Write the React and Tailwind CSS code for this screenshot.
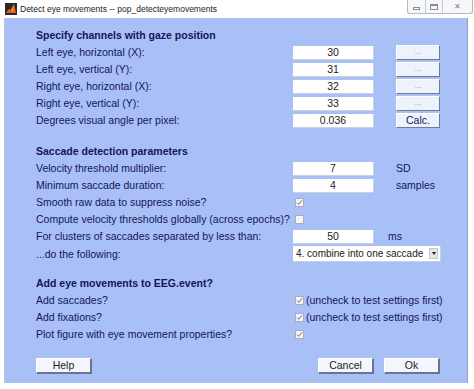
import React from "react";

const navy = "text-[#14145c]";

const Input = ({ value }) => (
  <div className="w-[81px] h-[14px] bg-white border-b border-r border-[#c9d0de] flex items-center justify-center text-[10.5px] leading-none text-[#222]">
    {value}
  </div>
);

const SmallButton = ({ children, dim }) => (
  <div
    className={`w-[44px] h-[15px] bg-[#eef2fd] border-t border-l border-t-white border-l-white border-b border-r border-b-[#6f7b94] border-r-[#6f7b94] flex items-center justify-center leading-none ${
      dim ? "text-[8px] text-[#8890a8] pb-[2px]" : "text-[10.5px] text-[#14145c]"
    }`}
  >
    {children}
  </div>
);

const Checkbox = ({ checked }) => (
  <div className="w-[9px] h-[9px] bg-[#f2f4f8] border border-[#a7adb9] flex items-center justify-center">
    {checked && (
      <svg width="7" height="7" viewBox="0 0 7 7">
        <path d="M1 3.6 L2.7 5.3 L6 1.3" fill="none" stroke="#6a6f7c" strokeWidth="1" />
      </svg>
    )}
  </div>
);

// one line of the dialog: label column, value column, gap, side column
const Row = ({ label, mid, side, h = "h-[17px]" }) => (
  <div className={`flex items-center ${h}`}>
    <div className={`w-[257px] text-[10.5px] leading-none ${navy} whitespace-nowrap`}>{label}</div>
    <div className="w-[81px] flex items-center">{mid}</div>
    <div className="w-[22px]" />
    <div className="flex items-center">{side}</div>
  </div>
);

const Header = ({ children, className = "" }) => (
  <div className={`h-[17px] flex items-center text-[10.5px] font-bold leading-none ${navy} ${className}`}>
    {children}
  </div>
);

const DialogButton = ({ children, className = "" }) => (
  <div
    className={`h-[16px] bg-[#f3f6fe] border-t border-l border-t-white border-l-white border-b-2 border-r-2 border-b-[#6a7590] border-r-[#6a7590] flex items-center justify-center text-[10.5px] leading-none text-[#222] ${className}`}
  >
    {children}
  </div>
);

const TitleIcon = () => (
  <svg width="12" height="12" viewBox="0 0 12 12">
    <rect width="12" height="12" fill="#2a2a2a" />
    <path d="M1 10 L4 6 L6 7 L9 1 L11 10 Z" fill="#e0601a" />
    <path d="M6 7 L9 1 L8 9 Z" fill="#f4a030" />
  </svg>
);

export default function App() {
  return (
    <div className="w-[474px] h-[389px] bg-white relative overflow-hidden font-['Liberation_Sans',Arial,sans-serif]">
      {/* title bar */}
      <div className="h-[18px] flex items-center pl-[5px] gap-[2px]">
        <TitleIcon />
        <span className="text-[8.5px] text-[#222] leading-none ml-[1px]">
          Detect eye movements -- pop_detecteyemovements
        </span>
      </div>
      <div className="absolute top-0 left-[407px] w-[66px] h-[14px] flex border border-t-0 border-[#b5b9c0] rounded-b-[3px] bg-[#f6f7f9]">
        <div className="w-[18px] flex items-center justify-center border-r border-[#c5c9cf]">
          <div className="w-[7px] h-[3px] border border-[#8a8d93] mt-[3px]" />
        </div>
        <div className="w-[17px] flex items-center justify-center border-r border-[#c5c9cf]">
          <div className="w-[8px] h-[6px] border border-[#8a8d93] border-t-2" />
        </div>
        <div className="flex-1 flex items-center justify-center text-[8px] text-[#7d8187] leading-none">
          ✕
        </div>
      </div>

      {/* dialog body */}
      <div className="ml-[4px] w-[464px] h-[365px] bg-[#a8c0f6] border-l border-[#bcc5d6] border-r border-r-[#8ea2cc] pl-[31px] pt-[9px]">
        <Header>Specify channels with gaze position</Header>
        <Row label="Left eye, horizontal (X):" mid={<Input value="30" />} side={<SmallButton dim>...</SmallButton>} />
        <Row label="Left eye, vertical (Y):" mid={<Input value="31" />} side={<SmallButton dim>...</SmallButton>} />
        <Row label="Right eye, horizontal (X):" mid={<Input value="32" />} side={<SmallButton dim>...</SmallButton>} />
        <Row label="Right eye, vertical (Y):" mid={<Input value="33" />} side={<SmallButton dim>...</SmallButton>} />
        <Row label="Degrees visual angle per pixel:" mid={<Input value="0.036" />} side={<SmallButton>Calc.</SmallButton>} />

        <Header className="mt-[14px]">Saccade detection parameters</Header>
        <Row
          label="Velocity threshold multiplier:"
          mid={<Input value="7" />}
          side={<span className={`text-[10.5px] leading-none ${navy}`}>SD</span>}
        />
        <Row
          label="Minimum saccade duration:"
          mid={<Input value="4" />}
          side={<span className={`text-[10.5px] leading-none ${navy}`}>samples</span>}
        />
        <Row label="Smooth raw data to suppress noise?" mid={<div className="pl-[2px]"><Checkbox checked /></div>} />
        <Row
          label="Compute velocity thresholds globally (across epochs)?"
          mid={<div className="pl-[2px]"><Checkbox /></div>}
        />
        <Row
          label="For clusters of saccades separated by less than:"
          mid={<Input value="50" />}
          side={<span className={`text-[10.5px] leading-none ${navy} -ml-[8px]`}>ms</span>}
        />
        <div className="flex items-center h-[18px]">
          <div className={`w-[257px] text-[10.5px] leading-none ${navy}`}>...do the following:</div>
          <div className="w-[148px] h-[16px] bg-white border-b border-r border-[#c9d0de] flex items-center pl-[3px] pr-[2px]">
            <span className="flex-1 text-[10px] leading-none text-[#222] whitespace-nowrap">
              4. combine into one saccade
            </span>
            <div className="w-[9px] h-[11px] bg-[#e3e6ec] border border-[#c5c9d2] flex items-center justify-center">
              <div className="w-0 h-0 border-l-[2.5px] border-r-[2.5px] border-t-[3px] border-l-transparent border-r-transparent border-t-[#222]" />
            </div>
          </div>
        </div>

        <Header className="mt-[12px]">Add eye movements to EEG.event?</Header>
        {["Add saccades?", "Add fixations?"].map((l) => (
          <div key={l} className="flex items-center h-[17px]">
            <div className={`w-[257px] text-[10.5px] leading-none ${navy}`}>{l}</div>
            <div className="pl-[2px] flex items-center gap-[2px]">
              <Checkbox checked />
              <span className={`text-[10.5px] leading-none ${navy} whitespace-nowrap`}>
                (uncheck to test settings first)
              </span>
            </div>
          </div>
        ))}
        <Row label="Plot figure with eye movement properties?" mid={<div className="pl-[2px]"><Checkbox checked /></div>} />

        <div className="flex items-center mt-[15px]">
          <DialogButton className="w-[56px]">Help</DialogButton>
          <div className="w-[226px]" />
          <DialogButton className="w-[56px]">Cancel</DialogButton>
          <div className="w-[10px]" />
          <DialogButton className="w-[56px]">Ok</DialogButton>
        </div>
      </div>
    </div>
  );
}
